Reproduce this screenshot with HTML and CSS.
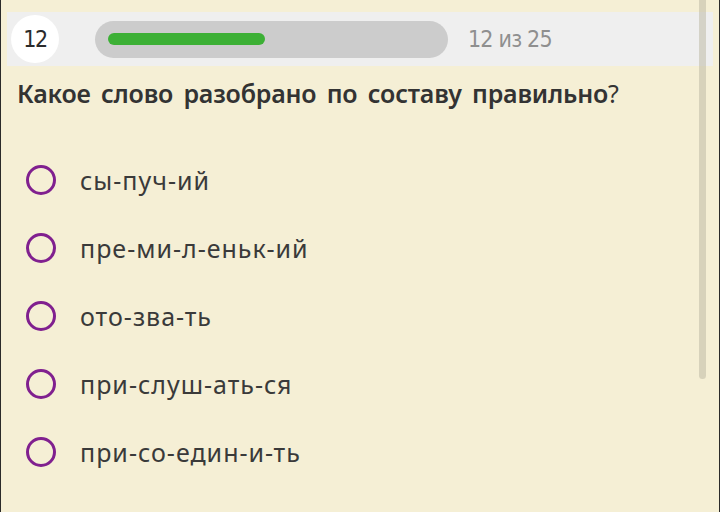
FILE: index.html
```html
<!DOCTYPE html>
<html lang="ru">
<head>
<meta charset="utf-8">
<link rel="stylesheet" href="styles.css">
</head>
<body>
<div class="frame">
  <div class="header">
    <div class="num">12</div>
    <div class="track"><div class="fill" style="width:157px"></div></div>
    <div class="count">12 из 25</div>
  </div>
  <h1 class="question">Какое слово разобрано по составу правильно<span class="qm">?</span></h1>
  <ul class="options">
    <li class="option"><span class="radio"></span><span class="label">сы-пуч-ий</span></li>
    <li class="option"><span class="radio"></span><span class="label">пре-ми-л-еньк-ий</span></li>
    <li class="option"><span class="radio"></span><span class="label">ото-зва-ть</span></li>
    <li class="option"><span class="radio"></span><span class="label">при-слуш-ать-ся</span></li>
    <li class="option"><span class="radio"></span><span class="label">при-со-един-и-ть</span></li>
  </ul>
  <div class="scrollbar"></div>
</div>
</body>
</html>
```
FILE: styles.css
```css
html, body {
  margin: 0;
  padding: 0;
}
body {
  width: 720px;
  height: 512px;
  overflow: hidden;
  background: #f5efd5;
}
.frame {
  position: relative;
  height: 512px;
  box-sizing: border-box;
  border-left: 1px solid #2a2a2a;
  border-right: 1px solid #2a2a2a;
  padding: 12px 6px 0 6px;
  font-family: "Noto Sans", "Open Sans", sans-serif;
}
.header {
  display: flex;
  align-items: center;
  height: 54px;
  background: #efefef;
  padding-left: 4px;
}
.num {
  width: 48px;
  height: 48px;
  border-radius: 50%;
  background: #ffffff;
  display: flex;
  align-items: center;
  justify-content: center;
  font-family: "DejaVu Sans Condensed", "DejaVu Sans", sans-serif;
  font-size: 23px;
  color: #2b2b2b;
  letter-spacing: -1.5px;
}
.track {
  margin-left: 36px;
  width: 353px;
  height: 37px;
  border-radius: 19px;
  background: #cccccc;
  display: flex;
  align-items: center;
  padding-left: 13px;
  box-sizing: border-box;
}
.fill {
  height: 12px;
  border-radius: 6px;
  background: #3cb035;
}
.count {
  margin-left: 20px;
  font-family: "DejaVu Sans Condensed", "DejaVu Sans", sans-serif;
  font-size: 23px;
  color: #8f8f8f;
  letter-spacing: -0.8px;
}
.question {
  margin: 10px 0 0 10px;
  font-size: 25px;
  font-weight: 600;
  color: #333333;
  line-height: 34px;
  letter-spacing: -0.2px;
  word-spacing: 4px;
}
.qm {
  font-weight: 400;
}
.options {
  list-style: none;
  margin: 53px 0 0 0;
  padding: 0;
  display: flex;
  flex-direction: column;
  gap: 34px;
}
.option {
  display: flex;
  align-items: center;
  height: 34px;
  padding-left: 19px;
}
.radio {
  width: 24px;
  height: 24px;
  border: 3px solid #80208f;
  border-radius: 50%;
  flex: none;
}
.label {
  margin-left: 24px;
  font-size: 25px;
  color: #3a3a3a;
  letter-spacing: 1px;
}
.scrollbar {
  position: absolute;
  top: 0;
  left: 698px;
  width: 7px;
  height: 379px;
  border-radius: 0 0 4px 4px;
  background: rgba(190, 185, 165, 0.55);
}
```
